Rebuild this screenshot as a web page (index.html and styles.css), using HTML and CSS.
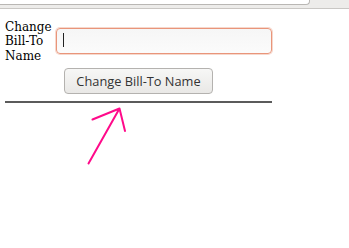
FILE: index.html
```html
<!DOCTYPE html>
<html>
<head>
<meta charset="utf-8">
<link rel="stylesheet" href="styles.css">
</head>
<body>
<div class="topbar"><div class="urlbox"></div></div>
<div class="content">
  <div class="row">
    <label class="label" for="name">Change<br>Bill-To<br>Name</label>
    <div class="field">
      <input id="name" class="input" type="text">
      <span class="caret"></span>
    </div>
  </div>
  <div class="btnrow"><button class="btn">Change Bill-To Name</button></div>
  <div class="rule"></div>
</div>
<svg class="arrow" width="349" height="248" viewBox="0 0 349 248">
  <path d="M88.5 163.5 L119.5 108.5 M92.5 119.5 L119.5 108.5 L125 131" fill="none" stroke="#ff0a8a" stroke-width="2" stroke-linecap="round" stroke-linejoin="round"/>
</svg>
</body>
</html>
```
FILE: styles.css
```css
html, body { margin: 0; padding: 0; background: #fff; }
body { width: 349px; height: 248px; overflow: hidden; position: relative; }
.topbar {
  height: 8px;
  background: #edecea;
  border-bottom: 1px solid #c9c7c4;
}
.urlbox {
  width: 309px;
  height: 4px;
  background: #fff;
  border-right: 1px solid #b9b7b4;
  border-bottom: 1px solid #b9b7b4;
  border-bottom-right-radius: 4px;
}
.content { padding: 11px 0 0 5px; }
.row { display: flex; align-items: flex-start; gap: 5px; }
.label {
  font-family: "DejaVu Serif", serif;
  font-size: 12px;
  line-height: 14.3px;
  color: #000;
  width: 46px;
}
.field { position: relative; margin-top: 8px; }
.input {
  display: block;
  box-sizing: border-box;
  width: 216px;
  height: 26px;
  margin: 0;
  border: 1px solid #e9957a;
  border-radius: 4px;
  background: linear-gradient(#f6f6f6, #fbfbfb);
  box-shadow: 0 0 0 1px #f6d8cd;
  outline: none;
}
.caret {
  position: absolute;
  left: 7px;
  top: 5px;
  width: 1px;
  height: 14px;
  background: #222;
}
.btnrow { padding: 5px 0 0 59px; }
.btn {
  display: block;
  box-sizing: border-box;
  width: 149px;
  height: 26px;
  margin: 0;
  padding: 0;
  border: 1px solid #b4b2af;
  border-radius: 4px;
  background: linear-gradient(#f7f7f6, #e9e8e6);
  font-family: "Open Sans", sans-serif;
  font-size: 12.8px;
  color: #333;
}
.rule {
  margin-top: 7px;
  width: 267px;
  height: 2px;
  background: #5b5b5b;
}
.arrow { position: absolute; left: 0; top: 0; pointer-events: none; }
```
